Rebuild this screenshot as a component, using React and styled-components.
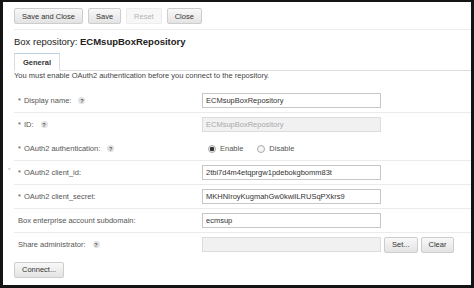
import React from 'react';
import styled, { createGlobalStyle } from 'styled-components';

const GlobalStyle = createGlobalStyle`
  html, body {
    margin: 0;
    padding: 0;
    background: #fff;
  }
  body {
    font-family: "Liberation Sans", Arial, sans-serif;
  }
`;

const Frame = styled.div`
  box-sizing: border-box;
  width: 474px;
  height: 288px;
  border: 3px solid #141414;
  border-top-width: 2px;
  background: #fff;
  padding: 6px 0 0 11px;
  color: #333;
`;

const Toolbar = styled.div`
  display: flex;
  gap: 5px;
  padding-bottom: 5px;
  border-bottom: 1px solid #ededed;
`;

const Button = styled.button`
  box-sizing: border-box;
  height: 16px;
  padding: 0 7px;
  font-family: inherit;
  font-size: 7.5px;
  color: ${p => (p.disabled ? '#b5b5b5' : '#333')};
  background: ${p => (p.disabled ? '#f7f7f7' : 'linear-gradient(#f8f8f8, #e3e3e3)')};
  border: 1px solid ${p => (p.disabled ? '#ececec' : '#cdcdcd')};
  border-radius: 2px;
  cursor: pointer;
`;

const Title = styled.h2`
  margin: 6px 0 0;
  font-size: 9.5px;
  line-height: 12px;
  font-weight: normal;
  color: #222;
  b {
    font-weight: bold;
  }
`;

const TabBar = styled.div`
  display: flex;
  margin-top: 5px;
  border-bottom: 1px solid #dcdcdc;
`;

const Tab = styled.div`
  box-sizing: border-box;
  height: 18px;
  width: 46px;
  margin-bottom: -1px;
  display: flex;
  align-items: center;
  justify-content: center;
  font-size: 7.5px;
  font-weight: bold;
  color: #333;
  background: #fff;
  border: 1px solid #d6dde6;
  border-top-color: #b9cde3;
  border-bottom-color: #fff;
`;

const Message = styled.p`
  margin: 0;
  font-size: 7.5px;
  line-height: 10px;
  color: #444;
`;

const Form = styled.div`
  margin-top: 8px;
`;

const Row = styled.div`
  position: relative;
  box-sizing: border-box;
  height: 24px;
  display: grid;
  grid-template-columns: 188px 1fr;
  align-items: center;
  border-bottom: 1px solid ${p => (p.$noLine ? 'transparent' : '#ebebeb')};
`;

const Label = styled.div`
  display: flex;
  align-items: center;
  padding-left: 4px;
  font-size: 7.5px;
  color: #555;
`;

const Star = styled.span`
  margin-right: 3px;
  color: #555;
`;

const OuterStar = styled.span`
  position: absolute;
  left: -6px;
  top: 6px;
  font-size: 6px;
  color: #aaa;
`;

const Help = styled.span`
  display: inline-flex;
  align-items: center;
  justify-content: center;
  width: 7px;
  height: 7px;
  margin-left: 7px;
  border-radius: 50%;
  background: #e2e2e2;
  color: #555;
  font-size: 5.5px;
  font-weight: bold;
`;

const Field = styled.div`
  display: flex;
  align-items: center;
  gap: 3px;
`;

const Input = styled.input`
  box-sizing: border-box;
  width: 179px;
  height: 15px;
  padding: 0 3px;
  font-family: inherit;
  font-size: 7.5px;
  color: #333;
  background: ${p => (p.disabled ? '#f1f1f1' : '#fff')};
  border: 1px solid ${p => (p.disabled ? '#dcdcdc' : '#c6c6c6')};
  border-radius: 0;
  outline: none;
  &:disabled {
    color: #a9a9a9;
  }
`;

const Radios = styled.div`
  display: flex;
  align-items: center;
  gap: 14px;
  padding-left: 6px;
`;

const RadioLabel = styled.label`
  display: flex;
  align-items: center;
  gap: 4px;
  font-size: 7.5px;
  color: #555;
`;

const RadioDot = styled.span`
  box-sizing: border-box;
  width: 8px;
  height: 8px;
  border-radius: 50%;
  border: 1px solid #aaa;
  background: radial-gradient(circle, ${p => (p.$on ? '#333 0, #333 2px, #eee 2.5px' : '#f6f6f6 0, #f6f6f6 3px')});
`;

const FooterBar = styled.div`
  margin-top: 1px;
`;

const rows = [
  { label: 'Display name:', req: true, help: true, value: 'ECMsupBoxRepository' },
  { label: 'ID:', req: true, help: true, value: 'ECMsupBoxRepository', disabled: true, noLine: true },
  { label: 'OAuth2 authentication:', req: true, help: true, radio: true },
  { label: 'OAuth2 client_id:', req: true, outer: true, value: '2tbi7d4m4etqprgw1pdebokgbomm83t' },
  { label: 'OAuth2 client_secret:', req: true, value: 'MKHNIroyKugmahGw0kwilLRUSqPXkrs9' },
  { label: 'Box enterprise account subdomain:', value: 'ecmsup' },
  { label: 'Share administrator:', help: true, value: '', disabled: true, buttons: true, noLine: true },
];

export default function App() {
  return (
    <>
      <GlobalStyle />
      <Frame>
        <Toolbar>
          <Button>Save and Close</Button>
          <Button>Save</Button>
          <Button disabled>Reset</Button>
          <Button>Close</Button>
        </Toolbar>
        <Title>
          Box repository: <b>ECMsupBoxRepository</b>
        </Title>
        <TabBar>
          <Tab>General</Tab>
        </TabBar>
        <Message>You must enable OAuth2 authentication before you connect to the repository.</Message>
        <Form>
          {rows.map(r => (
            <Row key={r.label} $noLine={r.noLine}>
              {r.outer && <OuterStar>*</OuterStar>}
              <Label>
                {r.req && <Star>*</Star>}
                {r.label}
                {r.help && <Help>?</Help>}
              </Label>
              <Field>
                {r.radio ? (
                  <Radios>
                    <RadioLabel><RadioDot $on />Enable</RadioLabel>
                    <RadioLabel><RadioDot />Disable</RadioLabel>
                  </Radios>
                ) : (
                  <Input readOnly disabled={r.disabled} value={r.value} />
                )}
                {r.buttons && (
                  <>
                    <Button>Set...</Button>
                    <Button>Clear</Button>
                  </>
                )}
              </Field>
            </Row>
          ))}
        </Form>
        <FooterBar>
          <Button>Connect...</Button>
        </FooterBar>
      </Frame>
    </>
  );
}
